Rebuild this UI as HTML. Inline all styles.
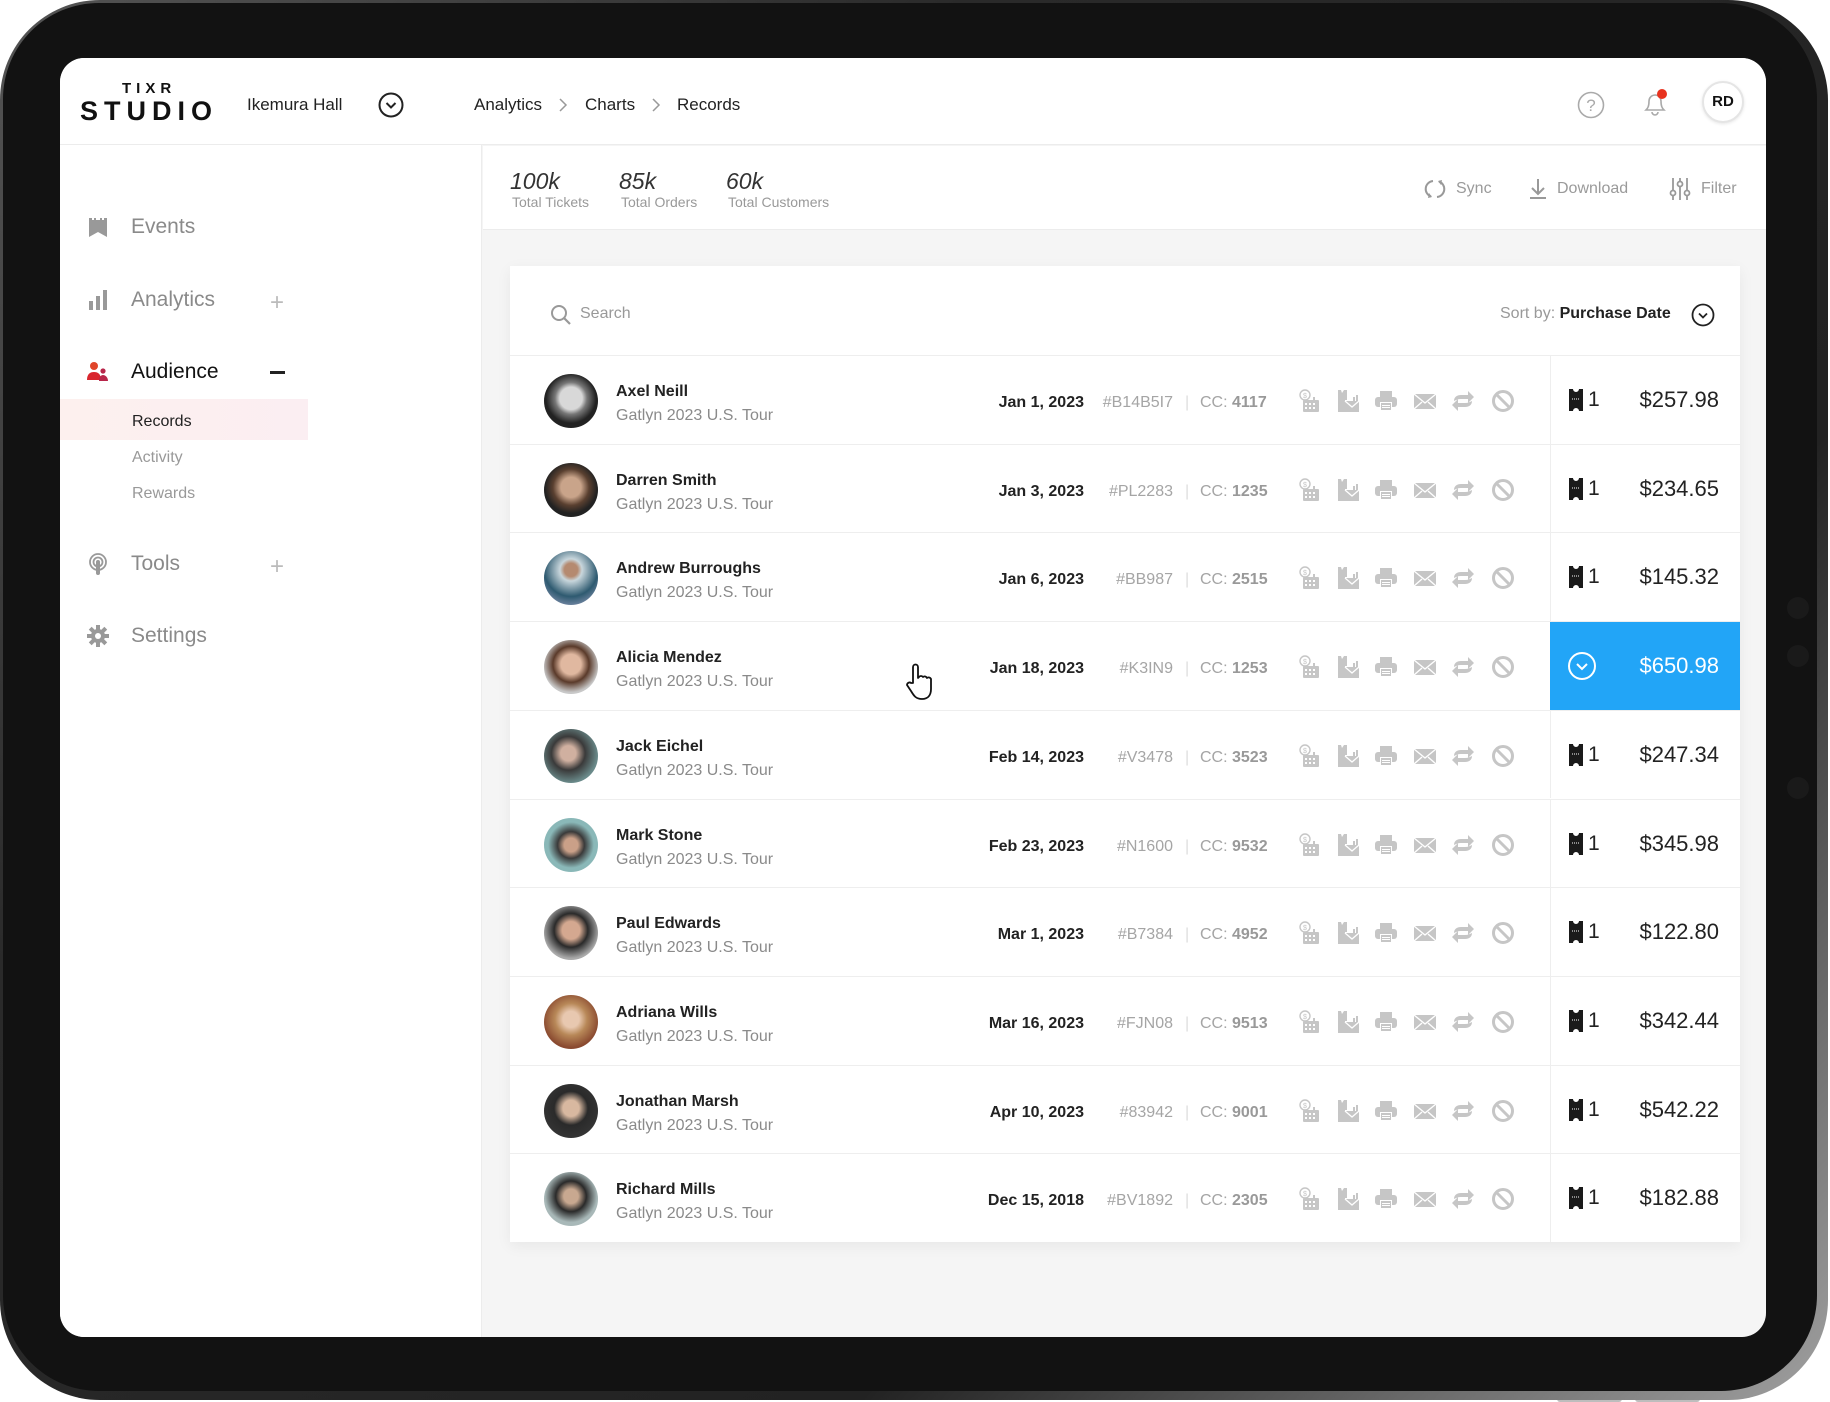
<!DOCTYPE html>
<html><head><meta charset="utf-8">
<style>
*{margin:0;padding:0;box-sizing:border-box}
body{width:1830px;height:1402px;background:#fff;position:relative;overflow:hidden;font-family:"Liberation Sans",Arial,sans-serif;color:#222}
.btn{position:absolute;background:#bdbdbd;height:8px;top:1394px;border-radius:0 0 3px 3px}
.rim{position:absolute;left:0;top:0;width:1828px;height:1400px;border-radius:100px;background:linear-gradient(135deg,#555,#2a2a2a 30%,#222 70%,#a0a0a0)}
.frame{position:absolute;left:3px;top:3px;width:1814px;height:1388px;border-radius:96px;background:#121212}
.screen{position:absolute;left:60px;top:58px;width:1706px;height:1279px;border-radius:24px;background:#f5f5f5;overflow:hidden}
.abs{position:absolute}
.hdr{left:0;top:0;width:1706px;height:87px;background:#fff;border-bottom:1px solid #ececec}
.side{left:0;top:87px;width:422px;height:1200px;background:#fff;border-right:1px solid #ececec}
.nav{position:absolute;left:71px;font-size:21px;color:#8a8a8a;line-height:26px}
.navi{position:absolute;left:-45px;top:1px;width:24px;height:24px}
.plus{position:absolute;left:210px;font-size:24px;color:#bbb;line-height:26px}
.sub{position:absolute;left:72px;font-size:16px;color:#999;line-height:20px}
.stats{left:423px;top:88px;width:1283px;height:84px;background:#fff;border-bottom:1px solid #ececec}
.num{position:absolute;font-size:23px;font-style:italic;color:#333;font-weight:300;line-height:26px}
.lbl{position:absolute;font-size:14px;color:#999;line-height:16px}
.act{position:absolute;top:33px;font-size:16px;color:#9a9a9a;line-height:20px}
.card{left:450px;top:208px;width:1230px;height:976px;background:#fff;box-shadow:0 4px 14px rgba(0,0,0,.06)}
.row{position:absolute;left:0;width:1230px;height:88.7px;border-top:1px solid #eee}
.av{position:absolute;left:34px;top:18px;width:54px;height:54px;border-radius:50%}
.nm{position:absolute;left:106px;top:26px;font-size:16px;font-weight:bold;color:#222;line-height:20px}
.tr{position:absolute;left:106px;top:50px;font-size:16px;color:#8a8a8a;line-height:20px}
.dt{position:absolute;right:656px;top:37px;font-size:16px;font-weight:bold;color:#222;line-height:20px;white-space:nowrap}
.or{position:absolute;right:567px;top:37px;font-size:16px;color:#a5a5a5;line-height:20px}
.sp{position:absolute;left:675px;top:37px;font-size:16px;color:#ddd;line-height:20px}
.cc{position:absolute;left:690px;top:37px;font-size:16px;color:#a5a5a5;line-height:20px}
.cc b{color:#999}
.ic{position:absolute;top:33px;width:24px;height:24px;fill:#c6c6c6}
.rc{position:absolute;left:1040px;top:0;width:190px;height:100%;border-left:1px solid #eee}
.tk{position:absolute;left:18px;top:33px;width:14px;height:22px}
.one{position:absolute;left:37px;top:32px;font-size:21px;color:#222;line-height:24px}
.pr{position:absolute;right:21px;top:31px;font-size:22px;color:#222;line-height:26px}
</style></head><body>
<div class="btn" style="left:1557px;width:65px"></div>
<div class="btn" style="left:1635px;width:65px"></div>
<div class="rim"></div>
<div class="frame"></div>
<div class="abs" style="left:1787px;top:597px;width:22px;height:22px;border-radius:50%;background:#1a1a1a"></div>
<div class="abs" style="left:1787px;top:645px;width:22px;height:22px;border-radius:50%;background:#1a1a1a"></div>
<div class="abs" style="left:1787px;top:777px;width:22px;height:22px;border-radius:50%;background:#1a1a1a"></div>

<svg width="0" height="0" style="position:absolute">
<defs>
<symbol id="i1" viewBox="0 0 24 24"><circle cx="8" cy="6" r="5" fill="none" stroke="#c6c6c6" stroke-width="1.4"/><text x="8" y="9" font-size="7" text-anchor="middle" fill="#c6c6c6" font-family="Liberation Sans">$</text><rect x="6" y="11" width="16" height="12" rx="1"/><rect x="16" y="8" width="2" height="4"/><g fill="#fff"><rect x="8" y="14" width="2" height="2"/><rect x="12" y="14" width="2" height="2"/><rect x="16" y="14" width="2" height="2"/><rect x="8" y="18" width="2" height="2"/><rect x="12" y="18" width="2" height="2"/><rect x="16" y="18" width="2" height="2"/></g></symbol>
<symbol id="i2" viewBox="0 0 24 24"><path d="M2 1h3l1 3 2-3h3v10H9v12H2z"/><rect x="17" y="8" width="2" height="4"/><rect x="20" y="6" width="2" height="6"/><path d="M9 12h14v11H9z" fill="#c6c6c6"/><path d="M9 12l7 6 7-6" fill="none" stroke="#fff" stroke-width="1.3"/></symbol>
<symbol id="i3" viewBox="0 0 24 24"><rect x="6" y="2" width="12" height="6"/><rect x="1" y="8" width="22" height="10" rx="3"/><rect x="6" y="13" width="12" height="9" fill="#fff"/><rect x="7" y="14" width="10" height="7"/><rect x="8" y="16" width="8" height="1" fill="#fff"/><rect x="8" y="18" width="8" height="1" fill="#fff"/></symbol>
<symbol id="i4" viewBox="0 0 24 24"><rect x="1" y="5" width="22" height="15"/><path d="M1 5l11 9 11-9M1 20l8-7M23 20l-8-7" fill="none" stroke="#fff" stroke-width="1.4"/></symbol>
<symbol id="i5" viewBox="0 0 24 24"><path d="M3 12c0-4 3-6 7-6h7V2l6 6-6 6v-4h-7c-3 0-5 1-7 2z"/><path d="M21 12c0 4-3 6-7 6H7v4l-6-6 6-6v4h7c3 0 5-1 7-2z"/></symbol>
<symbol id="i6" viewBox="0 0 24 24"><circle cx="12" cy="12" r="9.5" fill="none" stroke="#c6c6c6" stroke-width="3"/><path d="M5.5 5.5l13 13" stroke="#c6c6c6" stroke-width="3"/></symbol>
<symbol id="tk" viewBox="0 0 14 22"><path d="M0 0h4a3 3 0 0 0 6 0h4v22h-4a3 3 0 0 0-6 0H0z" fill="#1a1a1a"/><path d="M3 10h8" stroke="#fff" stroke-width="1" stroke-dasharray="1 1"/></symbol>
</defs>
</svg>

<div class="screen">
 <div class="abs hdr">
  <div class="abs" style="left:62px;top:22px;font-size:15px;font-weight:bold;letter-spacing:5px;color:#111">TIXR</div>
  <div class="abs" style="left:20px;top:38px;font-size:27px;font-weight:bold;letter-spacing:6px;color:#111">STUDIO</div>
  <div class="abs" style="left:187px;top:37px;font-size:17px;color:#222">Ikemura Hall</div>
  <svg class="abs" style="left:318px;top:34px" width="26" height="26" viewBox="0 0 26 26"><circle cx="13" cy="13" r="11.5" fill="none" stroke="#222" stroke-width="2"/><path d="M8.5 11l4.5 4.5 4.5-4.5" fill="none" stroke="#222" stroke-width="2"/></svg>
  <div class="abs" style="left:414px;top:37px;font-size:17px;color:#222">Analytics</div>
  <svg class="abs" style="left:498px;top:40px" width="10" height="14" viewBox="0 0 10 14"><path d="M2 1l6 6-6 6" fill="none" stroke="#999" stroke-width="1.5"/></svg>
  <div class="abs" style="left:525px;top:37px;font-size:17px;color:#222">Charts</div>
  <svg class="abs" style="left:591px;top:40px" width="10" height="14" viewBox="0 0 10 14"><path d="M2 1l6 6-6 6" fill="none" stroke="#999" stroke-width="1.5"/></svg>
  <div class="abs" style="left:617px;top:37px;font-size:17px;color:#222">Records</div>
  <svg class="abs" style="left:1517px;top:33px" width="28" height="28" viewBox="0 0 28 28"><circle cx="14" cy="14" r="12.5" fill="none" stroke="#aaa" stroke-width="1.6"/><text x="14" y="20" font-size="17" text-anchor="middle" fill="#aaa" font-family="Liberation Sans">?</text></svg>
  <svg class="abs" style="left:1580px;top:30px" width="30" height="30" viewBox="0 0 30 30"><path d="M6 22c2-2 3-4 3-9a6 6 0 0 1 12 0c0 5 1 7 3 9z" fill="none" stroke="#aaa" stroke-width="1.6"/><path d="M12 24a3 3 0 0 0 6 0" fill="none" stroke="#aaa" stroke-width="1.6"/><circle cx="22" cy="6" r="5" fill="#e8331f"/></svg>
  <div class="abs" style="left:1642px;top:23px;width:42px;height:42px;border-radius:50%;background:#fff;border:2px solid #e5e5e5;box-shadow:0 1px 3px rgba(0,0,0,.1);font-size:15px;font-weight:bold;text-align:center;line-height:38px;color:#111">RD</div>
 </div>
 <div class="abs side">
  <div class="nav" style="top:69px;"><svg class="navi" viewBox="0 0 24 24"><path d="M3 3h3v2h2V3h2v2h4V3h2v2h2V3h3v19l-9-5-9 5z" fill="#999"/></svg>Events</div>
  <div class="nav" style="top:142px"><svg class="navi" viewBox="0 0 24 24"><rect x="3" y="13" width="4" height="9" fill="#999"/><rect x="10" y="8" width="4" height="14" fill="#999"/><rect x="17" y="2" width="4" height="20" fill="#999"/></svg>Analytics</div>
  <div class="plus" style="top:145px">+</div>
  <div class="nav" style="top:214px;color:#111"><svg class="navi" viewBox="0 0 24 24"><circle cx="8" cy="6" r="4" fill="#e0452a"/><path d="M1 20c0-6 3-8 7-8s7 2 7 8z" fill="#d9262e"/><circle cx="17" cy="11" r="2.6" fill="#b8264a"/><path d="M13 21c0-4 2-6 4-6s5 2 5 6z" fill="#b8264a"/></svg>Audience</div>
  <div class="abs" style="left:210px;top:226px;width:15px;height:2.5px;background:#222"></div>
  <div class="abs" style="left:0;top:254px;width:248px;height:41px;background:linear-gradient(90deg,#fdf0ee,#fbeef2)"></div>
  <div class="sub" style="top:267px;color:#222">Records</div>
  <div class="sub" style="top:303px">Activity</div>
  <div class="sub" style="top:339px">Rewards</div>
  <div class="nav" style="top:406px"><svg class="navi" viewBox="0 0 24 24"><circle cx="12" cy="10" r="8" fill="none" stroke="#999" stroke-width="1.8"/><circle cx="12" cy="10" r="4.5" fill="none" stroke="#999" stroke-width="1.8"/><rect x="10" y="8" width="4" height="15" rx="2" fill="#999"/></svg>Tools</div>
  <div class="plus" style="top:409px">+</div>
  <div class="nav" style="top:478px"><svg class="navi" viewBox="0 0 24 24"><g fill="#999"><circle cx="12" cy="12" r="7"/><rect x="10" y="1" width="4" height="22"/><rect x="1" y="10" width="22" height="4"/><rect x="10" y="1" width="4" height="22" transform="rotate(45 12 12)"/><rect x="10" y="1" width="4" height="22" transform="rotate(-45 12 12)"/></g><circle cx="12" cy="12" r="3" fill="#fff"/></svg>Settings</div>
 </div>
 <div class="abs stats">
  <div class="num" style="left:27px;top:22px">100k</div><div class="lbl" style="left:29px;top:48px">Total Tickets</div>
  <div class="num" style="left:136px;top:22px">85k</div><div class="lbl" style="left:138px;top:48px">Total Orders</div>
  <div class="num" style="left:243px;top:22px">60k</div><div class="lbl" style="left:245px;top:48px">Total Customers</div>
  <svg class="abs" style="left:941px;top:32px" width="22" height="22" viewBox="0 0 22 22"><path d="M9 3A8 8 0 0 0 7 18.5M13 19a8 8 0 0 0 2-15.5" fill="none" stroke="#999" stroke-width="2"/><path d="M5 15l3 4-4 1zM17 7l-3-4 4-1z" fill="#999"/></svg>
  <div class="act" style="left:973px">Sync</div>
  <svg class="abs" style="left:1045px;top:32px" width="20" height="22" viewBox="0 0 20 22"><path d="M10 1v14M4 10l6 6 6-6M2 20h16" fill="none" stroke="#999" stroke-width="2"/></svg>
  <div class="act" style="left:1074px">Download</div>
  <svg class="abs" style="left:1186px;top:31px" width="22" height="24" viewBox="0 0 22 24"><g stroke="#999" stroke-width="1.8" fill="#fff"><path d="M4 1v22M11 1v22M18 1v22"/><circle cx="4" cy="16" r="2.5"/><circle cx="11" cy="7" r="2.5"/><circle cx="18" cy="16" r="2.5"/></g></svg>
  <div class="act" style="left:1218px">Filter</div>
 </div>
 <div class="abs card">
  <svg class="abs" style="left:40px;top:38px" width="22" height="22" viewBox="0 0 22 22"><circle cx="9" cy="9" r="7" fill="none" stroke="#999" stroke-width="2"/><path d="M14 14l6 6" stroke="#999" stroke-width="2.2"/></svg>
  <div class="abs" style="left:70px;top:39px;font-size:16px;color:#999">Search</div>
  <div class="abs" style="left:990px;top:39px;font-size:16px;color:#999">Sort by: <b style="color:#222">Purchase Date</b></div>
  <svg class="abs" style="left:1181px;top:37px" width="24" height="24" viewBox="0 0 24 24"><circle cx="12" cy="12" r="10.5" fill="none" stroke="#222" stroke-width="1.8"/><path d="M8 10.5l4 4 4-4" fill="none" stroke="#222" stroke-width="1.8"/></svg>

  <div class="row" style="top:89px"><div class="av" style="background:radial-gradient(circle at 50% 45%,#d8d8d8 0 28%,#777 40%,#222 62%)"></div><div class="nm">Axel Neill</div><div class="tr">Gatlyn 2023 U.S. Tour</div><div class="dt">Jan 1, 2023</div><div class="or">#B14B5I7</div><div class="sp">|</div><div class="cc">CC: <b>4117</b></div>
   <svg class="ic" style="left:787px"><use href="#i1"/></svg><svg class="ic" style="left:826px"><use href="#i2"/></svg><svg class="ic" style="left:864px"><use href="#i3"/></svg><svg class="ic" style="left:903px"><use href="#i4"/></svg><svg class="ic" style="left:941px"><use href="#i5"/></svg><svg class="ic" style="left:981px"><use href="#i6"/></svg>
   <div class="rc"><svg class="tk"><use href="#tk"/></svg><div class="one">1</div><div class="pr">$257.98</div></div></div>

  <div class="row" style="top:177.7px"><div class="av" style="background:radial-gradient(circle at 50% 45%,#c9a48a 0 25%,#5a4030 45%,#222 65%)"></div><div class="nm">Darren Smith</div><div class="tr">Gatlyn 2023 U.S. Tour</div><div class="dt">Jan 3, 2023</div><div class="or">#PL2283</div><div class="sp">|</div><div class="cc">CC: <b>1235</b></div>
   <svg class="ic" style="left:787px"><use href="#i1"/></svg><svg class="ic" style="left:826px"><use href="#i2"/></svg><svg class="ic" style="left:864px"><use href="#i3"/></svg><svg class="ic" style="left:903px"><use href="#i4"/></svg><svg class="ic" style="left:941px"><use href="#i5"/></svg><svg class="ic" style="left:981px"><use href="#i6"/></svg>
   <div class="rc"><svg class="tk"><use href="#tk"/></svg><div class="one">1</div><div class="pr">$234.65</div></div></div>

  <div class="row" style="top:266.4px"><div class="av" style="background:radial-gradient(circle at 50% 35%,#b58a70 0 15%,#c8d6dc 25%,#2e5a70 60%,#aac)"></div><div class="nm">Andrew Burroughs</div><div class="tr">Gatlyn 2023 U.S. Tour</div><div class="dt">Jan 6, 2023</div><div class="or">#BB987</div><div class="sp">|</div><div class="cc">CC: <b>2515</b></div>
   <svg class="ic" style="left:787px"><use href="#i1"/></svg><svg class="ic" style="left:826px"><use href="#i2"/></svg><svg class="ic" style="left:864px"><use href="#i3"/></svg><svg class="ic" style="left:903px"><use href="#i4"/></svg><svg class="ic" style="left:941px"><use href="#i5"/></svg><svg class="ic" style="left:981px"><use href="#i6"/></svg>
   <div class="rc"><svg class="tk"><use href="#tk"/></svg><div class="one">1</div><div class="pr">$145.32</div></div></div>

  <div class="row" style="top:355.1px"><div class="av" style="background:radial-gradient(circle at 50% 45%,#e0b8a0 0 25%,#5a3a2a 45%,#c8c8c8 70%)"></div><div class="nm">Alicia Mendez</div><div class="tr">Gatlyn 2023 U.S. Tour</div><div class="dt">Jan 18, 2023</div><div class="or">#K3IN9</div><div class="sp">|</div><div class="cc">CC: <b>1253</b></div>
   <svg class="ic" style="left:787px"><use href="#i1"/></svg><svg class="ic" style="left:826px"><use href="#i2"/></svg><svg class="ic" style="left:864px"><use href="#i3"/></svg><svg class="ic" style="left:903px"><use href="#i4"/></svg><svg class="ic" style="left:941px"><use href="#i5"/></svg><svg class="ic" style="left:981px"><use href="#i6"/></svg>
   <svg class="abs" style="left:394px;top:41px" width="30" height="38" viewBox="0 0 30 38"><path d="M9 20V4a2.5 2.5 0 0 1 5 0v11l1-1a2.5 2.5 0 0 1 4 0 2.5 2.5 0 0 1 4 1 2.5 2.5 0 0 1 4 1v10c0 6-3 10-9 10s-8-3-11-8l-4-6a2.5 2.5 0 0 1 4-2z" fill="#fff" stroke="#111" stroke-width="1.8" stroke-linejoin="round"/></svg>
   <div class="rc" style="background:#22a5f7;border-left:0;top:0"><svg class="abs" style="left:17px;top:29px" width="30" height="30" viewBox="0 0 30 30"><circle cx="15" cy="15" r="13" fill="none" stroke="#fff" stroke-width="2"/><path d="M10 13l5 5 5-5" fill="none" stroke="#fff" stroke-width="2"/></svg><div class="pr" style="color:#fff">$650.98</div></div></div>

  <div class="row" style="top:443.8px"><div class="av" style="background:radial-gradient(circle at 45% 45%,#d0b0a0 0 18%,#3a3a3a 40%,#6a8a8a 70%)"></div><div class="nm">Jack Eichel</div><div class="tr">Gatlyn 2023 U.S. Tour</div><div class="dt">Feb 14, 2023</div><div class="or">#V3478</div><div class="sp">|</div><div class="cc">CC: <b>3523</b></div>
   <svg class="ic" style="left:787px"><use href="#i1"/></svg><svg class="ic" style="left:826px"><use href="#i2"/></svg><svg class="ic" style="left:864px"><use href="#i3"/></svg><svg class="ic" style="left:903px"><use href="#i4"/></svg><svg class="ic" style="left:941px"><use href="#i5"/></svg><svg class="ic" style="left:981px"><use href="#i6"/></svg>
   <div class="rc"><svg class="tk"><use href="#tk"/></svg><div class="one">1</div><div class="pr">$247.34</div></div></div>

  <div class="row" style="top:532.5px"><div class="av" style="background:radial-gradient(circle at 50% 50%,#caa088 0 18%,#3a3a3a 35%,#8ab8b8 60%)"></div><div class="nm">Mark Stone</div><div class="tr">Gatlyn 2023 U.S. Tour</div><div class="dt">Feb 23, 2023</div><div class="or">#N1600</div><div class="sp">|</div><div class="cc">CC: <b>9532</b></div>
   <svg class="ic" style="left:787px"><use href="#i1"/></svg><svg class="ic" style="left:826px"><use href="#i2"/></svg><svg class="ic" style="left:864px"><use href="#i3"/></svg><svg class="ic" style="left:903px"><use href="#i4"/></svg><svg class="ic" style="left:941px"><use href="#i5"/></svg><svg class="ic" style="left:981px"><use href="#i6"/></svg>
   <div class="rc"><svg class="tk"><use href="#tk"/></svg><div class="one">1</div><div class="pr">$345.98</div></div></div>

  <div class="row" style="top:621.2px"><div class="av" style="background:radial-gradient(circle at 50% 45%,#d4a890 0 22%,#2a2a2a 42%,#aaa 70%)"></div><div class="nm">Paul Edwards</div><div class="tr">Gatlyn 2023 U.S. Tour</div><div class="dt">Mar 1, 2023</div><div class="or">#B7384</div><div class="sp">|</div><div class="cc">CC: <b>4952</b></div>
   <svg class="ic" style="left:787px"><use href="#i1"/></svg><svg class="ic" style="left:826px"><use href="#i2"/></svg><svg class="ic" style="left:864px"><use href="#i3"/></svg><svg class="ic" style="left:903px"><use href="#i4"/></svg><svg class="ic" style="left:941px"><use href="#i5"/></svg><svg class="ic" style="left:981px"><use href="#i6"/></svg>
   <div class="rc"><svg class="tk"><use href="#tk"/></svg><div class="one">1</div><div class="pr">$122.80</div></div></div>

  <div class="row" style="top:709.9px"><div class="av" style="background:radial-gradient(circle at 50% 45%,#e8c8b0 0 20%,#b88858 40%,#8a4a30 70%)"></div><div class="nm">Adriana Wills</div><div class="tr">Gatlyn 2023 U.S. Tour</div><div class="dt">Mar 16, 2023</div><div class="or">#FJN08</div><div class="sp">|</div><div class="cc">CC: <b>9513</b></div>
   <svg class="ic" style="left:787px"><use href="#i1"/></svg><svg class="ic" style="left:826px"><use href="#i2"/></svg><svg class="ic" style="left:864px"><use href="#i3"/></svg><svg class="ic" style="left:903px"><use href="#i4"/></svg><svg class="ic" style="left:941px"><use href="#i5"/></svg><svg class="ic" style="left:981px"><use href="#i6"/></svg>
   <div class="rc"><svg class="tk"><use href="#tk"/></svg><div class="one">1</div><div class="pr">$342.44</div></div></div>

  <div class="row" style="top:798.6px"><div class="av" style="background:radial-gradient(circle at 50% 45%,#d8b8a0 0 20%,#2a2a2a 42%,#333 70%)"></div><div class="nm">Jonathan Marsh</div><div class="tr">Gatlyn 2023 U.S. Tour</div><div class="dt">Apr 10, 2023</div><div class="or">#83942</div><div class="sp">|</div><div class="cc">CC: <b>9001</b></div>
   <svg class="ic" style="left:787px"><use href="#i1"/></svg><svg class="ic" style="left:826px"><use href="#i2"/></svg><svg class="ic" style="left:864px"><use href="#i3"/></svg><svg class="ic" style="left:903px"><use href="#i4"/></svg><svg class="ic" style="left:941px"><use href="#i5"/></svg><svg class="ic" style="left:981px"><use href="#i6"/></svg>
   <div class="rc"><svg class="tk"><use href="#tk"/></svg><div class="one">1</div><div class="pr">$542.22</div></div></div>

  <div class="row" style="top:887.3px"><div class="av" style="background:radial-gradient(circle at 50% 45%,#c8a890 0 18%,#2a2a2a 38%,#a8b8b8 65%)"></div><div class="nm">Richard Mills</div><div class="tr">Gatlyn 2023 U.S. Tour</div><div class="dt">Dec 15, 2018</div><div class="or">#BV1892</div><div class="sp">|</div><div class="cc">CC: <b>2305</b></div>
   <svg class="ic" style="left:787px"><use href="#i1"/></svg><svg class="ic" style="left:826px"><use href="#i2"/></svg><svg class="ic" style="left:864px"><use href="#i3"/></svg><svg class="ic" style="left:903px"><use href="#i4"/></svg><svg class="ic" style="left:941px"><use href="#i5"/></svg><svg class="ic" style="left:981px"><use href="#i6"/></svg>
   <div class="rc"><svg class="tk"><use href="#tk"/></svg><div class="one">1</div><div class="pr">$182.88</div></div></div>
 </div>
</div>
</body></html>
